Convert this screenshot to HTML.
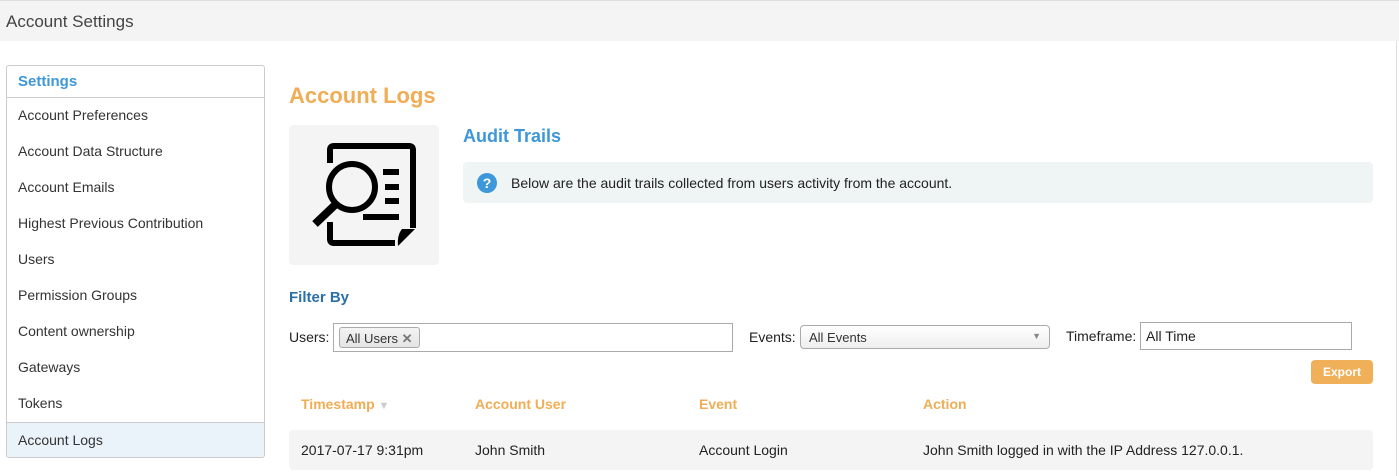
<!DOCTYPE html>
<html><head><meta charset="utf-8"><style>
*{box-sizing:border-box;margin:0;padding:0}
body{width:1399px;height:476px;background:#fff;font-family:"Liberation Sans",Arial,sans-serif;position:relative;overflow:hidden;color:#222}
.a{position:absolute}
.top{left:0;top:0;width:1399px;height:41px;background:#f4f4f4;border-top:1px solid #ddd}
.top span{position:absolute;left:6px;top:11px;font-size:17px;color:#444}
.rb{left:1396px;top:41px;width:1px;height:435px;background:#ddd}
.side{left:6px;top:65px;width:259px;height:393px;border:1px solid #ccc;border-radius:3px;overflow:hidden}
.side .h{height:32px;border-bottom:1px solid #ccc;padding:7px 11px;font-weight:bold;font-size:15px;color:#3d97d8}
.side .i{height:36px;padding:9px 11px;font-size:14px;color:#333}
.side .act{background:#eaf3fa;border-top:1px solid #ccc;height:37px}
.t{font-weight:bold}
.box{border:1px solid #aaa;background:#fff}
</style></head><body>
<div class="a top"><span>Account Settings</span></div>
<div class="a rb"></div>
<div class="a side">
<div class="h">Settings</div>
<div class="i">Account Preferences</div>
<div class="i">Account Data Structure</div>
<div class="i">Account Emails</div>
<div class="i">Highest Previous Contribution</div>
<div class="i">Users</div>
<div class="i">Permission Groups</div>
<div class="i">Content ownership</div>
<div class="i">Gateways</div>
<div class="i">Tokens</div>
<div class="i act">Account Logs</div>
</div>
<div class="a t" style="left:289px;top:83px;font-size:22px;color:#f0ad55">Account Logs</div>
<div class="a" style="left:289px;top:125px;width:150px;height:140px;background:#f4f4f4;border-radius:4px">
<svg width="150" height="140" viewBox="0 0 150 140" fill="none" stroke="#000">
<path d="M41 38 V25 Q41 21 45 21 H120 Q124 21 124 25 V103" stroke-width="6"/>
<path d="M41 97 V114 Q41 118 45 118 H106" stroke-width="6"/>
<path d="M113 104 L126 104 L109 121 Q108 110 113 104 Z" fill="#000" stroke="none"/>
<circle cx="63" cy="62" r="23" stroke-width="6"/>
<path d="M47 79 L26 99" stroke-width="8"/>
<path d="M94 47 H110 M96 62 H110 M96 76 H110 M74 92 H110" stroke-width="6"/>
</svg></div>
<div class="a t" style="left:463px;top:126px;font-size:18px;color:#3d97d8">Audit Trails</div>
<div class="a" style="left:463px;top:162px;width:910px;height:41px;background:#eef5f4;border-radius:4px">
<div class="a" style="left:14px;top:11px;width:20px;height:20px;border-radius:50%;background:#3d97d8;color:#fff;font-weight:bold;font-size:14px;text-align:center;line-height:20px">?</div>
<div class="a" style="left:48px;top:13px;font-size:14px">Below are the audit trails collected from users activity from the account.</div>
</div>
<div class="a t" style="left:289px;top:289px;font-size:15px;color:#2a6fa8">Filter By</div>
<div class="a" style="left:289px;top:329px;font-size:14px">Users:</div>
<div class="a box" style="left:333px;top:323px;width:400px;height:29px">
<div class="a" style="left:5px;top:3px;height:21px;padding:3px 6px;border:1px solid #aaa;border-radius:3px;background:linear-gradient(#f4f4f4,#e4e4e4);font-size:13px;color:#333">All Users <b style="color:#777">✕</b></div></div>
<div class="a" style="left:749px;top:329px;font-size:14px">Events:</div>
<div class="a" style="left:800px;top:325px;width:250px;height:24px;border:1px solid #aaa;border-radius:4px;background:linear-gradient(#fff,#eee);font-size:13px;padding:4px 8px;color:#333">All Events<span style="position:absolute;right:8px;top:5px;font-size:9px;color:#888">▼</span></div>
<div class="a" style="left:1066px;top:328px;font-size:14px">Timeframe:</div>
<div class="a box" style="left:1140px;top:322px;width:212px;height:28px;font-size:14px;padding:5px 5px">All Time</div>
<div class="a t" style="left:1311px;top:360px;width:62px;height:24px;background:#f0b05a;border-radius:4px;color:#fff;font-size:12px;text-align:center;line-height:24px">Export</div>
<div class="a t" style="left:301px;top:396px;font-size:14px;color:#f0ad55">Timestamp <span style="color:#ccc;font-size:11px">▼</span></div>
<div class="a t" style="left:475px;top:396px;font-size:14px;color:#f0ad55">Account User</div>
<div class="a t" style="left:699px;top:396px;font-size:14px;color:#f0ad55">Event</div>
<div class="a t" style="left:923px;top:396px;font-size:14px;color:#f0ad55">Action</div>
<div class="a" style="left:289px;top:430px;width:1084px;height:40px;background:#f4f4f4;border-radius:4px;font-size:14px">
<span class="a" style="left:12px;top:12px">2017-07-17 9:31pm</span>
<span class="a" style="left:186px;top:12px">John Smith</span>
<span class="a" style="left:410px;top:12px">Account Login</span>
<span class="a" style="left:634px;top:12px">John Smith logged in with the IP Address 127.0.0.1.</span>
</div>
</body></html>
